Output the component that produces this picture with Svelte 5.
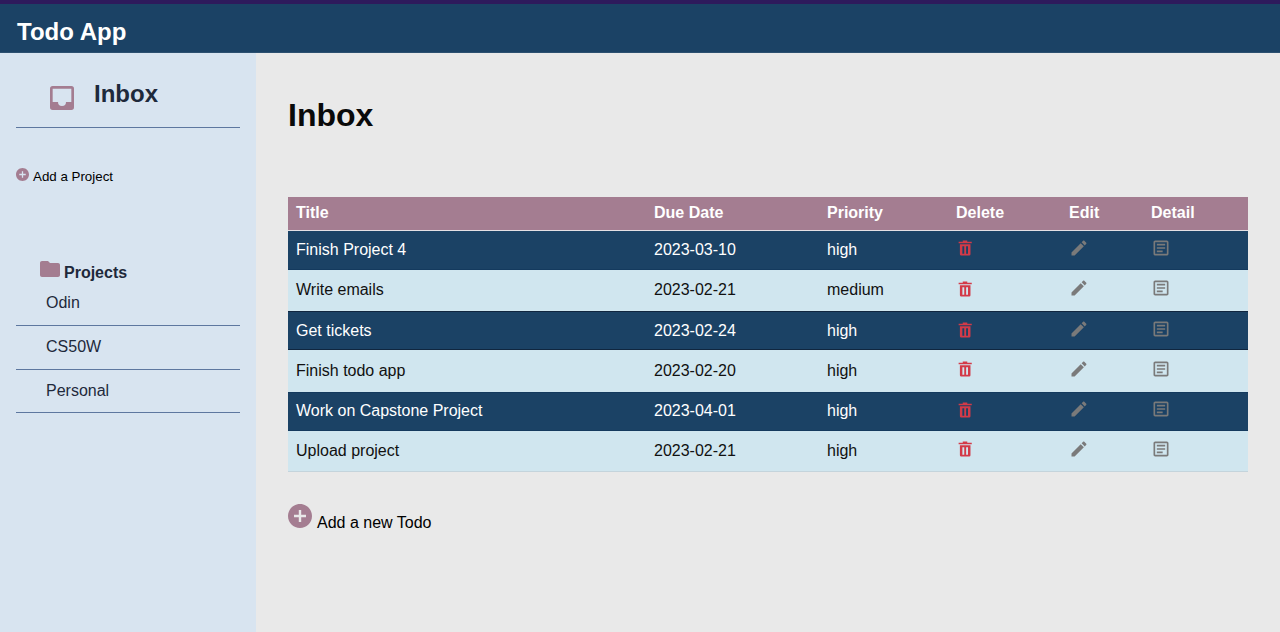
<script>
    const todos = [
        { title: 'Finish Project 4', due: '2023-03-10', priority: 'high' },
        { title: 'Write emails', due: '2023-02-21', priority: 'medium' },
        { title: 'Get tickets', due: '2023-02-24', priority: 'high' },
        { title: 'Finish todo app', due: '2023-02-20', priority: 'high' },
        { title: 'Work on Capstone Project', due: '2023-04-01', priority: 'high' },
        { title: 'Upload project', due: '2023-02-21', priority: 'high' }
    ];
    const projects = ['Odin', 'CS50W', 'Personal'];
    const plus = 'M12 2C6.48 2 2 6.48 2 12s4.48 10 10 10 10-4.48 10-10S17.52 2 12 2zm5 11h-4v4h-2v-4H7v-2h4V7h2v4h4v2z';
</script>

<div class="page">
    <header class="topbar">
        <div class="brand">Todo App</div>
    </header>

    <div class="body">
        <aside class="sidebar">
            <div class="inbox-link">
                <svg class="inbox-icon" viewBox="0 0 24 24">
                    <path d="M19 3H5a2 2 0 0 0-2 2v14a2 2 0 0 0 2 2h14a2 2 0 0 0 2-2V5a2 2 0 0 0-2-2m0 12h-4a3 3 0 0 1-6 0H5V5h14v10z" />
                </svg>
                <span class="inbox-label">Inbox</span>
            </div>

            <div class="add-project">
                <svg class="plus-small" viewBox="2 2 20 20"><path d={plus} /></svg>
                <span>Add a Project</span>
            </div>

            <div class="projects-head">
                <svg class="folder" viewBox="0 0 24 24">
                    <path d="M10 4H4c-1.1 0-1.99.9-1.99 2L2 18c0 1.1.9 2 2 2h16c1.1 0 2-.9 2-2V8c0-1.1-.9-2-2-2h-8l-2-2z" />
                </svg>
                <span>Projects</span>
            </div>
            <ul class="projects">
                {#each projects as name}
                    <li>{name}</li>
                {/each}
            </ul>
        </aside>

        <main class="content">
            <h1>Inbox</h1>

            <table>
                <colgroup>
                    <col style="width: 358px" />
                    <col style="width: 173px" />
                    <col style="width: 129px" />
                    <col style="width: 113px" />
                    <col style="width: 82px" />
                    <col style="width: 105px" />
                </colgroup>
                <thead>
                    <tr>
                        <th>Title</th>
                        <th>Due Date</th>
                        <th>Priority</th>
                        <th>Delete</th>
                        <th>Edit</th>
                        <th>Detail</th>
                    </tr>
                </thead>
                <tbody>
                    {#each todos as todo}
                        <tr>
                            <td>{todo.title}</td>
                            <td>{todo.due}</td>
                            <td>{todo.priority}</td>
                            <td>
                                <svg class="icon trash" viewBox="0 0 24 24">
                                    <path fill-rule="evenodd" d="M3.500 3.500h5.500V2h6v1.500h6v2.300h-17.500zM5.200 7h14.100v13.200a1.800 1.800 0 0 1-1.800 1.800H7a1.800 1.800 0 0 1-1.800-1.800zM8.500 9.500v10h2.500v-10zM13.500 9.500v10h2.500v-10z" />
                                </svg>
                            </td>
                            <td>
                                <svg class="icon" viewBox="0 0 24 24">
                                    <path d="M3 17.250V21h3.750L17.810 9.940l-3.750-3.750L3 17.250zM20.710 7.040c.39-.39.39-1.020 0-1.410l-2.340-2.340c-.39-.39-1.020-.39-1.410 0l-1.830 1.830 3.750 3.750 1.830-1.830z" />
                                </svg>
                            </td>
                            <td>
                                <svg class="icon" viewBox="0 0 24 24">
                                    <path d="M19 5v14H5V5h14m0-2H5c-1.100 0-2 .9-2 2v14c0 1.100.9 2 2 2h14c1.100 0 2-.9 2-2V5c0-1.100-.9-2-2-2z" />
                                    <path d="M14 17H7v-2h7v2zm3-4H7v-2h10v2zm0-4H7V7h10v2z" />
                                </svg>
                            </td>
                        </tr>
                    {/each}
                </tbody>
            </table>

            <div class="add-todo">
                <svg class="plus-big" viewBox="2 2 20 20"><path d={plus} /></svg>
                <span>Add a new Todo</span>
            </div>
        </main>
    </div>
</div>

<style>
    :global(body) {
        margin: 0;
        font-family: 'Liberation Sans', Arial, sans-serif;
        color: #000;
    }
    .page {
        display: flex;
        flex-direction: column;
        height: 632px;
        overflow: hidden;
    }
    .topbar {
        box-sizing: border-box;
        height: 53px;
        flex: none;
        background: #1b4265;
        border-top: 4px solid #2e1a5c;
        border-bottom: 1px solid #2c5070;
        padding: 14px 17px 0;
    }
    .brand {
        color: #fff;
        font-size: 24px;
        font-weight: 700;
        line-height: 28px;
    }
    .body {
        display: flex;
        flex: 1;
        min-height: 0;
    }

    .sidebar {
        box-sizing: border-box;
        width: 256px;
        flex: none;
        background: #d8e4f0;
        padding: 0 16px;
        color: #1e293b;
    }
    .inbox-link {
        display: flex;
        align-items: flex-start;
        height: 75px;
        padding: 29px 0 0 30px;
        box-sizing: border-box;
        border-bottom: 1px solid #5d779f;
    }
    .inbox-icon { width: 32px; height: 32px; fill: #a47d91; flex: none; }
    .inbox-label {
        margin-left: 16px;
        margin-top: -2px;
        font-size: 24px;
        font-weight: 700;
        line-height: 28px;
    }
    .add-project {
        display: flex;
        align-items: flex-start;
        gap: 4px;
        margin-top: 40px;
        font-size: 13.33px;
        line-height: 16px;
        color: #000;
    }
    .add-project span { margin-top: 1px; }
    .plus-small { width: 13px; height: 13px; fill: #a47d91; }
    .projects-head {
        display: flex;
        align-items: center;
        margin: 76px 0 0 22px;
        font-size: 16px;
        font-weight: 700;
        height: 24px;
    }
    .folder { width: 24px; height: 24px; fill: #a47d91; margin-right: 2px; margin-top: -8px; }
    .projects {
        list-style: none;
        margin: 0;
        padding: 0;
    }
    .projects li {
        box-sizing: border-box;
        height: 43.700px;
        padding: 12px 0 0 30px;
        line-height: 18px;
        font-size: 16px;
        border-bottom: 1px solid #5d779f;
    }
    .projects li:first-child {
        height: 41px;
        padding-top: 9px;
    }

    .content {
        flex: 1;
        padding: 44px 32px 0;
        background: #e9e9e9;
        min-width: 0;
    }
    h1 {
        margin: 0;
        font-size: 32px;
        line-height: 37px;
        font-weight: 700;
        color: #0a0a0a;
    }
    table {
        width: 960px;
        margin-top: 63px;
        border-collapse: collapse;
        table-layout: fixed;
        font-size: 16px;
    }
    th {
        height: 33px;
        padding: 0 8px;
        box-sizing: border-box;
        text-align: left;
        font-weight: 700;
        color: #fff;
        background: #a47d91;
        border-bottom: 1px solid #e4e0e4;
    }
    td {
        box-sizing: border-box;
        height: 42px;
        padding: 0 8px;
        background: #d0e6ef;
        color: #111;
    }
    tbody tr:nth-child(odd) td {
        height: 39px;
        background: #1b4265;
        color: #fff;
        border-top: 1px solid #143a5e;
        border-bottom: 1px solid #143a5e;
    }
    tbody tr:nth-child(3) td {
        height: 38px;
        padding-top: 2px;
        border-color: #10263f;
    }
    tbody tr:nth-child(4) td {
        height: 43px;
    }
    tbody tr:nth-child(5) td {
        height: 38px;
    }
    tbody tr:last-child td {
        height: 41px;
        border-bottom: 1px solid #c4d4dc;
    }
    .icon {
        display: block;
        width: 20px;
        height: 20px;
        margin-top: -4px;
        fill: #7a7a7a;
    }
    .trash {
        width: 18px;
        height: 18px;
        margin-top: -3px;
        fill: #d33a48;
    }
    .add-todo {
        display: flex;
        align-items: flex-start;
        gap: 5px;
        margin-top: 32px;
        font-size: 16px;
        line-height: 18px;
    }
    .plus-big { width: 24px; height: 24px; fill: #a47d91; flex: none; }
    .add-todo span { margin-top: 10px; }
</style>
